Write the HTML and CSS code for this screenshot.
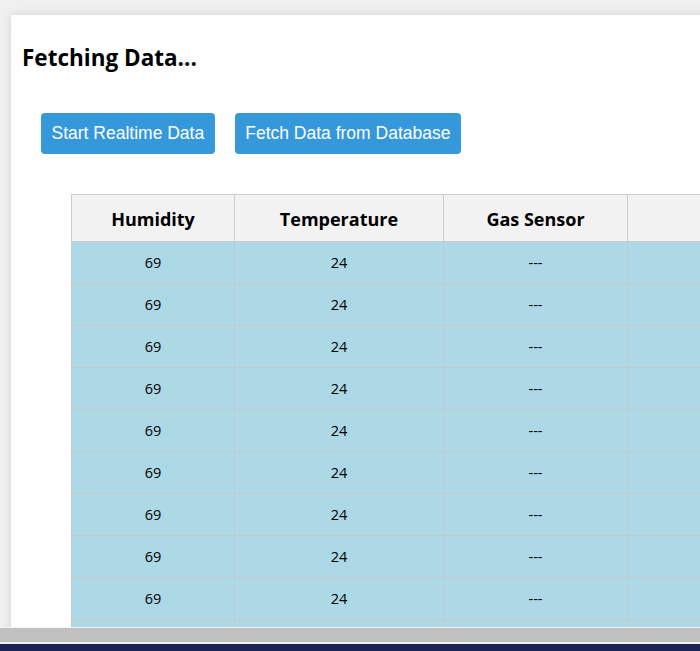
FILE: index.html
```html
<!DOCTYPE html>
<html>
<head>
<meta charset="utf-8">
<link rel="stylesheet" href="styles.css">
</head>
<body>
<div class="card">
  <h2 class="title">Fetching Data...</h2>
  <div class="actions">
    <button class="btn">Start Realtime Data</button>
    <button class="btn">Fetch Data from Database</button>
  </div>
  <table class="data">
    <colgroup>
      <col class="c1"><col class="c2"><col class="c3"><col class="c4">
    </colgroup>
    <thead>
      <tr><th>Humidity</th><th>Temperature</th><th>Gas Sensor</th><th></th></tr>
    </thead>
    <tbody>
      <tr><td>69</td><td>24</td><td>---</td><td></td></tr>
      <tr><td>69</td><td>24</td><td>---</td><td></td></tr>
      <tr><td>69</td><td>24</td><td>---</td><td></td></tr>
      <tr><td>69</td><td>24</td><td>---</td><td></td></tr>
      <tr><td>69</td><td>24</td><td>---</td><td></td></tr>
      <tr><td>69</td><td>24</td><td>---</td><td></td></tr>
      <tr><td>69</td><td>24</td><td>---</td><td></td></tr>
      <tr><td>69</td><td>24</td><td>---</td><td></td></tr>
      <tr><td>69</td><td>24</td><td>---</td><td></td></tr>
      <tr><td>69</td><td>24</td><td>---</td><td></td></tr>
    </tbody>
  </table>
</div>
<div class="hscroll"></div>
<div class="taskbar"></div>
</body>
</html>
```
FILE: styles.css
```css
html, body {
  margin: 0;
  padding: 0;
  height: 100%;
  overflow: hidden;
}
body {
  background: #f0f0f0;
  font-family: "Open Sans", "Noto Sans", sans-serif;
  color: #000;
}
.card {
  margin: 15px 0 0 11px;
  width: 800px;
  padding: 0 11px 40px;
  background: #fff;
  box-shadow: 0 0 10px rgba(0, 0, 0, 0.12);
}
.title {
  margin: 0;
  padding-top: 28px;
  font-size: 22.5px;
  line-height: 30px;
  font-weight: 700;
}
.actions {
  display: flex;
  gap: 20px;
  padding-left: 19px;
  margin-top: 40px;
}
.btn {
  height: 41px;
  padding: 0 10.5px;
  border: none;
  border-radius: 4px;
  background: #3498db;
  color: #fff;
  font-family: "Liberation Sans", Arial, sans-serif;
  font-size: 17.5px;
}
.data {
  margin: 40px 0 0 49px;
  border-collapse: collapse;
  table-layout: fixed;
  width: 756px;
  text-align: center;
}
.data th {
  height: 45px;
  padding: 1px 0 0;
  background: #f2f2f2;
  border: 1px solid #cccccc;
  font-size: 18px;
  font-weight: 700;
}
.data td {
  height: 41px;
  padding: 0;
  background: #add8e6;
  border: 1px solid #c8c8c8;
  font-size: 14.5px;
}
.c1 { width: 163px; }
.c2 { width: 209px; }
.c3 { width: 184px; }
.c4 { width: 200px; }
.hscroll {
  position: fixed;
  left: 0;
  right: 0;
  bottom: 9px;
  height: 14px;
  background: #c0c0c0;
  border-top: 1px solid #f4f4f4;
}
.taskbar {
  position: fixed;
  left: 0;
  right: 0;
  bottom: 0;
  height: 7px;
  background: #1b2452;
  border-top: 2px solid #f0f0f0;
}
```
